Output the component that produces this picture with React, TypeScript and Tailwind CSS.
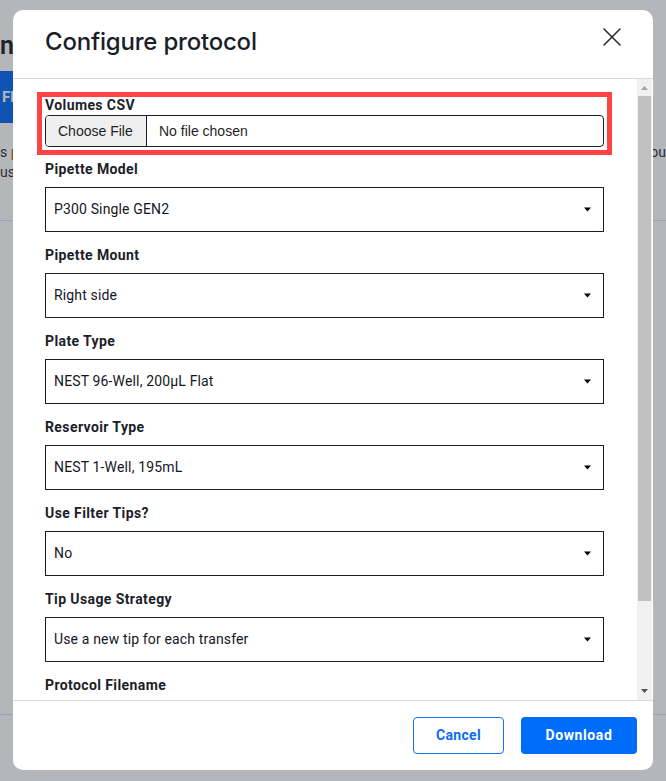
import React from "react";

const fields = [
  { label: "Pipette Model", value: "P300 Single GEN2" },
  { label: "Pipette Mount", value: "Right side" },
  { label: "Plate Type", value: "NEST 96-Well, 200µL Flat" },
  { label: "Reservoir Type", value: "NEST 1-Well, 195mL" },
  { label: "Use Filter Tips?", value: "No" },
  { label: "Tip Usage Strategy", value: "Use a new tip for each transfer" },
];

function Caret() {
  return (
    <svg width="7" height="5" viewBox="0 0 7 5" aria-hidden>
      <path d="M0 0.5H7L3.5 4.5Z" fill="#000" />
    </svg>
  );
}

function SelectField({ label, value }: { label: string; value: string }) {
  return (
    <div className="mb-[13px]">
      <div className="mb-2 text-[14px] font-bold leading-[20px] tracking-[0.4px] text-[#1b1e29]">{label}</div>
      <div className="flex h-[45px] items-center justify-between border border-[#1b1e29] pl-[8px] pr-[12px] text-[14px] tracking-[0.15px] text-[#15171f]">
        <span>{value}</span>
        <Caret />
      </div>
    </div>
  );
}

export default function App() {
  return (
    <div className="relative h-[781px] w-[666px] overflow-hidden bg-white font-['Roboto',sans-serif]">
      {/* background page */}
      <div className="flex h-full flex-col">
        <div className="pt-[30px]">
          <div className="text-[25px] font-semibold leading-[32px] text-[#1f2328]">na</div>
        </div>
        <div className="mt-[9px] flex h-[52px] w-[80px] items-center bg-[#0a6ef5] pl-[2px] text-[15px] font-bold text-white">
          Fl
        </div>
        <div className="mt-[19px] flex justify-between text-[14px] leading-[20px] text-[#333]">
          <span>
            s <span className="text-[#b86a10]">p</span>
          </span>
          <span>you</span>
        </div>
        <div className="text-[14px] leading-[20px] text-[#333]">ust</div>
        <div className="mt-[38px] h-px w-full bg-[#dfe1e4]" />
        <div className="mt-[493px] h-px w-full bg-[#dfe1e4]" />
      </div>

      {/* overlay */}
      <div className="absolute inset-0 bg-[#1a2233]/[0.33]" />

      {/* modal */}
      <div className="absolute left-[13px] top-[10px] flex h-[760px] w-[640px] flex-col overflow-hidden rounded-[10px] bg-white">
        <div className="flex h-[69px] shrink-0 items-start justify-between border-b border-[#d9d9d9] pl-[32px] pr-[32px]">
          <h2 className="pt-[16px] font-['Inter',sans-serif] text-[24px] font-medium leading-[32px] tracking-[-0.2px] text-[#1b1e29]">
            Configure protocol
          </h2>
          <svg className="mt-[18px]" width="18" height="18" viewBox="0 0 18 18" aria-hidden>
            <path d="M1 1L17 17M17 1L1 17" stroke="#2b2d33" strokeWidth="1.6" strokeLinecap="round" />
          </svg>
        </div>

        <div className="flex min-h-0 flex-1">
          <div className="min-w-0 flex-1 overflow-hidden pl-[32px] pr-[33px] pt-[16px]">
            <div className="relative mb-[12px]">
              <div className="pointer-events-none absolute -bottom-[8px] -left-[8px] -right-[8px] -top-[3px] border-[5px] border-[#ff4343]" />
              <div className="text-[14px] font-bold leading-[20px] tracking-[0.4px] text-[#1b1e29]">Volumes CSV</div>
              <div className="flex h-[32px] overflow-hidden rounded-[4px] border border-[#1b1e29] font-['Liberation_Sans',sans-serif] text-[14px] text-[#1f1f1f]">
                <div className="flex w-[101px] items-center border-r border-[#1b1e29] bg-[#efefef] pl-[12px]">
                  Choose File
                </div>
                <div className="flex items-center pl-[12px]">No file chosen</div>
              </div>
            </div>

            {fields.map((f) => (
              <SelectField key={f.label} label={f.label} value={f.value} />
            ))}

            <div>
              <div className="mb-2 text-[14px] font-bold leading-[20px] tracking-[0.4px] text-[#1b1e29]">Protocol Filename</div>
              <div className="h-[45px] border border-[#cfd1d6]" />
            </div>
          </div>

          {/* scrollbar */}
          <div className="mr-[1px] flex w-[15px] shrink-0 flex-col bg-[#f1f1f1]">
            <div className="flex h-[17px] items-center justify-center pt-[1px]">
              <svg width="7" height="4" viewBox="0 0 7 4" aria-hidden>
                <path d="M3.5 0L7 4H0Z" fill="#a3a3a3" />
              </svg>
            </div>
            <div className="mx-[1px] h-[505px] bg-[#c1c1c1]" />
            <div className="flex-1" />
            <div className="flex h-[17px] items-center justify-center pb-[2px]">
              <svg width="7" height="4" viewBox="0 0 7 4" aria-hidden>
                <path d="M0 0H7L3.5 4Z" fill="#505050" />
              </svg>
            </div>
          </div>
        </div>

        <div className="flex h-[70px] shrink-0 items-start justify-end gap-[17px] border-t border-[#dcdcdc] pr-[16px] pt-[16px]">
          <button className="flex h-[37px] w-[91px] items-center justify-center rounded-[4px] border border-[#1672f3] text-[14px] font-bold tracking-[0.3px] text-[#0a6cf5]">
            Cancel
          </button>
          <button className="flex h-[37px] w-[116px] items-center justify-center rounded-[4px] bg-[#006cfa] text-[14px] font-bold tracking-[0.6px] text-white">
            Download
          </button>
        </div>
      </div>
    </div>
  );
}
